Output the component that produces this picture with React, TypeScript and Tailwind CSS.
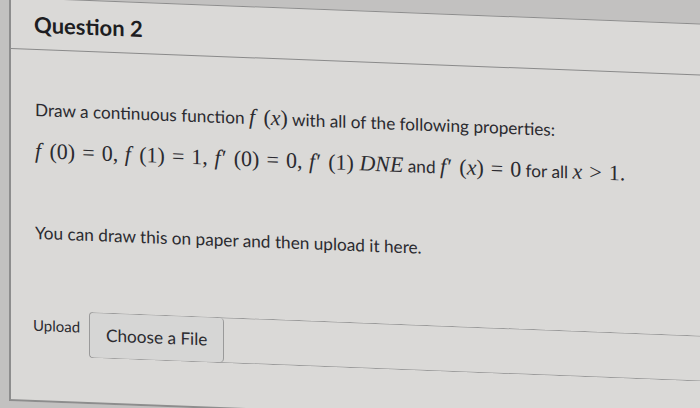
import React from 'react'

const math = { fontFamily: '"Liberation Serif", "DejaVu Serif", serif' }

function M({ children }: { children: React.ReactNode }) {
  return <span className="italic">{children}</span>
}

// function name followed by the gap KaTeX leaves before "("
function F({ p }: { p?: boolean }) {
  return <span className="mr-[0.38em] italic">{p ? 'f′' : 'f'}</span>
}

// relation symbol with KaTeX-like thick spacing
function R({ children }: { children: React.ReactNode }) {
  return <span className="mx-[0.32em]">{children}</span>
}

function C() {
  return <span className="mr-[0.3em]">,</span>
}

export default function App() {
  return (
    <div className="h-[408px] w-[700px] overflow-hidden bg-[#c2c1c0]" style={{ fontFamily: 'Lato, "Noto Sans", sans-serif' }}>
      {/* the photo is taken at a slight angle */}
      <div className="w-[700px] skew-y-[2.2deg] pt-[10px]">
        <div className="ml-[9px] h-[404px] border-l-2 border-t border-b-2 border-[#8d8d8d] bg-[#dad9d7]">
          <div className="h-[51px] border-b border-[#8a8a8a] pl-[23px] pt-[12px]">
            <h2 className="text-[22px] font-bold leading-[28px] text-[#1d1d22]">Question 2</h2>
          </div>

          <div className="pl-[24px] text-[17.2px] text-[#2b2b30]">
            <p className="mt-[45px] leading-[28px]">
              Draw a continuous function{' '}
              <span style={math} className="text-[22px]"><F />(<M>x</M>)</span> with all of the following properties:
            </p>
            <p className="mt-[12px] leading-[30px]">
              <span style={math} className="text-[22px]">
                <F />(0)<R>=</R>0<C /><F />(1)<R>=</R>1<C /><F p />(0)<R>=</R>0<C /><F p />(1) <M>DNE</M>
              </span>{' '}
              and{' '}
              <span style={math} className="text-[22px]">
                <F p />(<M>x</M>)<R>=</R>0
              </span>{' '}
              for all{' '}
              <span style={math} className="text-[22px]">
                <M>x</M>
                <R>&gt;</R>1.
              </span>
            </p>

            <p className="mt-[52px] leading-[28px]">You can draw this on paper and then upload it here.</p>

            <div className="mt-[63px] flex items-start">
              <span className="ml-[-2px] w-[56px] pt-[1px] text-[15px] leading-[28px]">Upload</span>
              <div className="flex h-[46px] flex-1 rounded-l-[4px] border-y border-l border-[#9a9a9a]">
                <button className="rounded-[4px] border-r border-[#9a9a9a] bg-[#d6d6d5] px-[16px] text-[17.2px] text-[#2b2b30]">
                  Choose a File
                </button>
              </div>
            </div>
          </div>
        </div>
      </div>
    </div>
  )
}
